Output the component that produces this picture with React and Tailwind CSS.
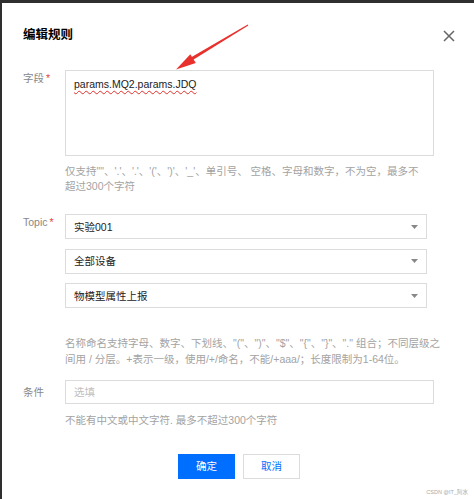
const font = { fontFamily: '"Liberation Sans", "Noto Sans CJK SC", sans-serif' }

function Label({ text, required }) {
  return (
    <div className="w-[42px] shrink-0 text-[10.5px] leading-[16px] text-[#888]">
      {text}
      {required ? <span className="ml-[2px] text-[#e54545]">*</span> : null}
    </div>
  )
}

function Select({ value }) {
  return (
    <div className="flex h-[25px] w-[362px] items-center justify-between border border-[#dcdcdc] pl-[8px] pr-[8px]">
      <span className="text-[10.5px] leading-[14px] text-[#222]">{value}</span>
      <svg width="7" height="4" viewBox="0 0 7 4">
        <path d="M0 0 H7 L3.5 4 Z" fill="#888" />
      </svg>
    </div>
  )
}

function Arrow() {
  return (
    <svg className="pointer-events-none absolute left-0 top-0" width="474" height="499">
      <polygon points="248.3,25.4 247.7,24.6 191.2,57.3 192.8,59.9" fill="#e8312c" />
      <polygon points="176,69.5 195.8,63 190.3,54.2" fill="#e8312c" />
    </svg>
  )
}

export default function App() {
  return (
    <div className="flex h-[499px] w-[474px] bg-[#2f2f2f] pl-[2px] pt-[3px]" style={font}>
      <div className="relative flex flex-1 flex-col bg-white">
        <div className="flex items-center justify-between pl-[21px] pr-[19px] pt-[24px]">
          <h2 className="text-[12.5px] font-bold leading-[16px] text-black">编辑规则</h2>
          <svg width="12" height="12" viewBox="0 0 12 12" className="mt-[1px]">
            <path d="M1 1 L11 11 M11 1 L1 11" stroke="#666" strokeWidth="1.5" />
          </svg>
        </div>

        <div className="mt-[27px] flex flex-col pl-[21px]">
          <div className="flex">
            <Label text="字段" required />
            <div className="w-[369px]">
              <div className="h-[86px] border border-[#dcdcdc] px-[8px] pt-[6px] text-[10.5px] leading-[14px] text-[#222]">
                <span className="underline decoration-wavy decoration-[#e0302c] decoration-1 underline-offset-[2px]">
                  params.MQ2.params.JDQ
                </span>
              </div>
              <p className="mt-[8px] text-[10.5px] leading-[15px] text-[#a3a3a3]">
                仅支持""、'.'、'.'、'('、')'、'_'、单引号、 空格、字母和数字，不为空，最多不
                <br />
                超过300个字符
              </p>
            </div>
          </div>

          <div className="mt-[20px] flex">
            <Label text="Topic" required />
            <div className="flex flex-col">
              <div className="flex flex-col gap-[9.5px]">
                <Select value="实验001" />
                <Select value="全部设备" />
                <Select value="物模型属性上报" />
              </div>
              <p className="mt-[27px] text-[10.5px] leading-[16px] text-[#a3a3a3]">
                {'名称命名支持字母、数字、下划线、"("、")"、"$"、"{"、"}"、"." 组合；不同层级之'}
                <br />
                间用 / 分层。+表示一级，使用/+/命名，不能/+aaa/；长度限制为1-64位。
              </p>
            </div>
          </div>

          <div className="mt-[13px] flex">
            <div className="w-[42px] shrink-0 pt-[4px] text-[10.5px] leading-[16px] text-[#888]">条件</div>
            <div className="w-[369px]">
              <div className="flex h-[24px] items-center border border-[#dcdcdc] px-[8px]">
                <span className="text-[10.5px] leading-[14px] text-[#c0c0c0]">选填</span>
              </div>
              <p className="mt-[8px] text-[10.5px] leading-[16px] text-[#a3a3a3]">
                不能有中文或中文字符. 最多不超过300个字符
              </p>
            </div>
          </div>
        </div>

        <div className="mt-[26px] flex justify-center gap-[8px] pl-[2px]">
          <button className="h-[25px] w-[57px] bg-[#006eff] text-[10.5px] text-white">确定</button>
          <button className="h-[25px] w-[57px] border border-[#dcdcdc] bg-white text-[10.5px] text-[#006eff]">取消</button>
        </div>

        <span className="absolute bottom-[3px] right-[6px] text-[5.5px] text-[#aaa]">CSDN @IT_阿水</span>
      </div>
      <Arrow />
    </div>
  )
}
